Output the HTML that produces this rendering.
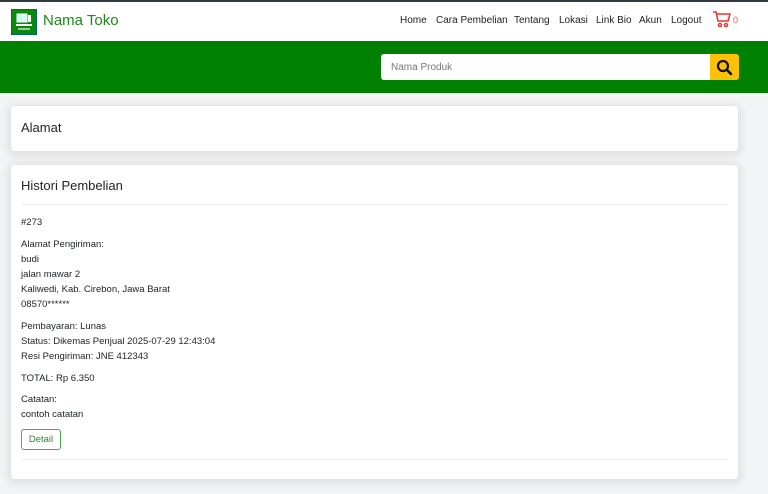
<!DOCTYPE html>
<html><head><meta charset="utf-8"><style>
*{box-sizing:border-box;margin:0;padding:0}
body{width:768px;height:494px;overflow:hidden;background:#f3f4f5;font-family:"Liberation Sans",sans-serif;color:#212529;position:relative}
.top{position:absolute;left:0;top:0;width:768px;height:2px;background:#333a40}
.nav{position:absolute;top:2px;left:0;width:768px;height:39px;background:#fff}
.logo{position:absolute;left:11px;top:7px;width:26px;height:26px;background:#0a8a0a;border:1px solid #066}
.brand{position:absolute;left:43px;top:10px;font-size:15px;color:#1a8a1a}
.links{position:absolute;top:13px;font-size:10px;color:#222}
.links span{position:absolute;white-space:nowrap}
.green{position:absolute;top:41px;left:0;width:768px;height:52px;background:#008000}
.search{position:absolute;left:381px;top:54px;width:329px;height:26px;background:#fff;border-radius:3px 0 0 3px;font-size:10px;color:#777;padding:8px 10px}
.btn{position:absolute;left:710px;top:54px;width:29px;height:26px;background:#ffc107;border-radius:0 3px 3px 0}
.card{position:absolute;left:11px;width:727px;background:#fff;border-radius:4px;box-shadow:0 2px 8px 4px rgba(0,0,0,.07)}
.h{font-size:13px;position:absolute;left:10px}
.t{position:absolute;left:10px;font-size:9.5px;line-height:15px}
.hr{position:absolute;left:10px;right:10px;height:1px;background:#eee}
</style></head><body>
<div class="top"></div>
<div class="nav">
<div class="logo"><svg width="24" height="24" viewBox="0 0 24 24"><rect x="5" y="4" width="10" height="8" fill="#cfe" stroke="#fff"/><rect x="16" y="5" width="3" height="7" fill="#fff"/><rect x="4" y="14" width="16" height="2" fill="#fff"/><rect x="6" y="18" width="12" height="2" fill="#9c9"/></svg></div>
<div class="brand">Nama Toko</div>
<div class="links">
<span style="left:400px">Home</span><span style="left:436px">Cara Pembelian</span><span style="left:514px">Tentang</span><span style="left:559px">Lokasi</span><span style="left:596px">Link Bio</span><span style="left:639px">Akun</span><span style="left:671px">Logout</span>
<span style="left:712px;top:-5px"><svg width="20" height="18" viewBox="0 0 20 18" fill="none" stroke="#e33" stroke-width="1.5"><path d="M1 2h3l2 9h10l2-7H5"/><circle cx="8" cy="15" r="1.5"/><circle cx="14" cy="15" r="1.5"/></svg></span>
<span style="left:733px;color:#e55;font-size:9px">0</span>
</div></div>
<div class="green"></div>
<div class="search">Nama Produk</div>
<div class="btn"><svg width="29" height="26" viewBox="0 0 29 26"><circle cx="13" cy="12" r="5" fill="none" stroke="#111" stroke-width="2.2"/><path d="M17 16l4 4" stroke="#111" stroke-width="2.6" stroke-linecap="round"/></svg></div>
<div class="card" style="top:106px;height:45px"><div class="h" style="top:14px">Alamat</div></div>
<div class="card" style="top:165px;height:314px">
<div class="h" style="top:13px">Histori Pembelian</div>
<div class="hr" style="top:39px"></div>
<div class="t" style="top:50px">#273</div>
<div class="t" style="top:72px">Alamat Pengiriman:<br>budi<br>jalan mawar 2<br>Kaliwedi, Kab. Cirebon, Jawa Barat<br>08570******</div>
<div class="t" style="top:154px">Pembayaran: Lunas<br>Status: Dikemas Penjual 2025-07-29 12:43:04<br>Resi Pengiriman: JNE 412343</div>
<div class="t" style="top:206px">TOTAL: Rp 6.350</div>
<div class="t" style="top:227px">Catatan:<br>contoh catatan</div>
<div style="position:absolute;left:10px;top:264px;width:40px;height:21px;border:1px solid #4caf50;border-radius:3px;font-size:9.5px;color:#2a8a2a;text-align:center;line-height:19px">Detail</div>
<div class="hr" style="top:294px"></div>
</div>
</body></html>
